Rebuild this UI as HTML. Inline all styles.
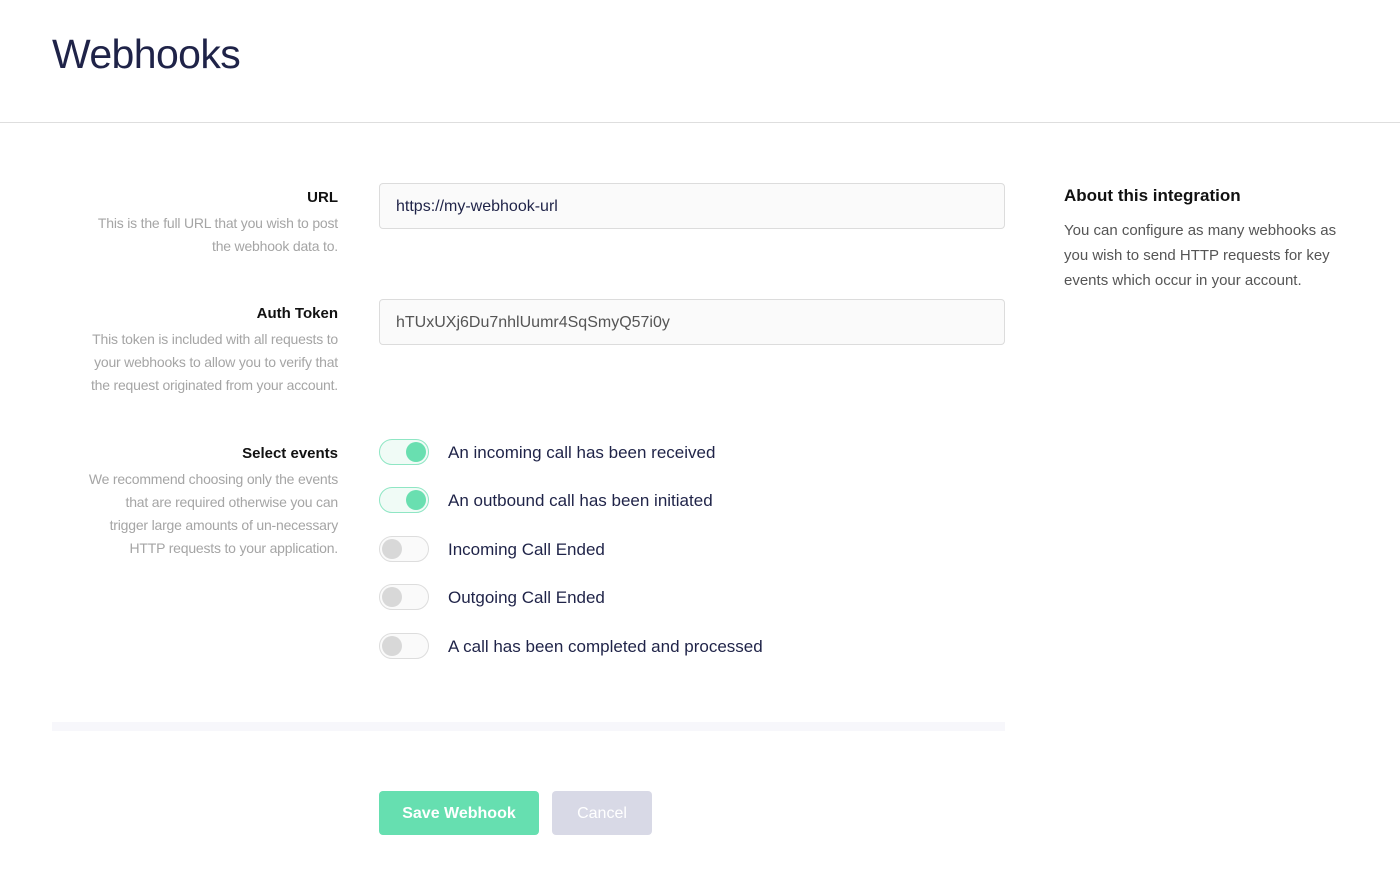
<!DOCTYPE html>
<html><head><style>
body{margin:0;width:1400px;height:876px;background:#fff;font-family:"Liberation Sans",sans-serif;position:relative;overflow:hidden}
.a{position:absolute}
h1{position:absolute;left:52px;top:31px;margin:0;font-size:41px;font-weight:normal;color:#1f2348;letter-spacing:-0.6px}
.lab{position:absolute;right:1062px;text-align:right;width:300px}
.lab b{display:block;font-size:15px;color:#111;margin-bottom:6px}
.lab span{display:block;font-size:14px;color:#a5a5a5;line-height:23px;letter-spacing:-0.2px}
.inp{position:absolute;left:379px;height:44px;border:1px solid #dcdcdc;border-radius:4px;background:#fafafa;font-size:16px;line-height:46px;box-sizing:content-box;padding-left:16px;width:608px}
.tg{position:absolute;left:379px;width:48px;height:24px;border-radius:14px;border:1px solid #ddd;background:#fafafa}
.tg i{position:absolute;left:2px;top:2px;width:20px;height:20px;border-radius:50%;background:#d8d8d8}
.tg.on{border-color:#8fe6c4;background:#f0fbf6}
.tg.on i{left:26px;background:#69dfb0}
.ev{position:absolute;left:448px;font-size:17px;color:#1f2348}
</style></head><body>
<h1>Webhooks</h1>
<div class="a" style="left:0;top:122px;width:1400px;height:1px;background:#dedede"></div>

<div class="lab" style="top:189px"><b>URL</b><span>This is the full URL that you wish to post<br>the webhook data to.</span></div>
<div class="inp" style="top:183px;color:#1f2348">https://my-webhook-url</div>

<div class="lab" style="top:305px"><b>Auth Token</b><span>This token is included with all requests to<br>your webhooks to allow you to verify that<br>the request originated from your account.</span></div>
<div class="inp" style="top:299px;color:#555">hTUxUXj6Du7nhlUumr4SqSmyQ57i0y</div>

<div class="lab" style="top:445px"><b>Select events</b><span>We recommend choosing only the events<br>that are required otherwise you can<br>trigger large amounts of un-necessary<br>HTTP requests to your application.</span></div>

<div class="tg on" style="top:439px"><i></i></div><div class="ev" style="top:443px">An incoming call has been received</div>
<div class="tg on" style="top:487px"><i></i></div><div class="ev" style="top:491px">An outbound call has been initiated</div>
<div class="tg" style="top:536px"><i></i></div><div class="ev" style="top:540px">Incoming Call Ended</div>
<div class="tg" style="top:584px"><i></i></div><div class="ev" style="top:588px">Outgoing Call Ended</div>
<div class="tg" style="top:633px"><i></i></div><div class="ev" style="top:637px">A call has been completed and processed</div>

<div class="a" style="left:1064px;top:186px;font-size:17px;font-weight:bold;color:#111">About this integration</div>
<div class="a" style="left:1064px;top:218px;width:290px;font-size:15px;line-height:25px;color:#555">You can configure as many webhooks as you wish to send HTTP requests for key events which occur in your account.</div>

<div class="a" style="left:52px;top:722px;width:953px;height:9px;background:#f7f7fb"></div>

<div class="a" style="left:379px;top:791px;width:160px;height:44px;border-radius:4px;background:#66dfb0;color:#fff;font-weight:bold;font-size:16px;text-align:center;line-height:46px">Save Webhook</div>
<div class="a" style="left:552px;top:791px;width:100px;height:44px;border-radius:4px;background:#d8d9e6;color:#fff;font-size:16px;text-align:center;line-height:46px">Cancel</div>
</body></html>
